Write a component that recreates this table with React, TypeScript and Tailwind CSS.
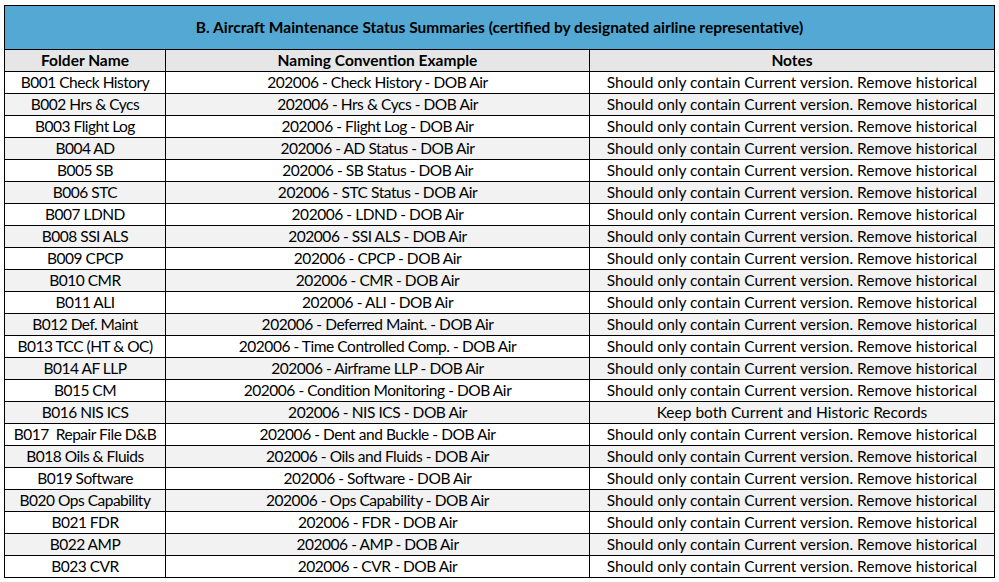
const rows: [string, string, string][] = [
  ["B001 Check History", "202006 - Check History - DOB Air", "Should only contain Current version. Remove historical"],
  ["B002 Hrs & Cycs", "202006 - Hrs & Cycs - DOB Air", "Should only contain Current version. Remove historical"],
  ["B003 Flight Log", "202006 - Flight Log - DOB Air", "Should only contain Current version. Remove historical"],
  ["B004 AD", "202006 - AD Status - DOB Air", "Should only contain Current version. Remove historical"],
  ["B005 SB", "202006 - SB Status - DOB Air", "Should only contain Current version. Remove historical"],
  ["B006 STC", "202006 - STC Status - DOB Air", "Should only contain Current version. Remove historical"],
  ["B007 LDND", "202006 - LDND - DOB Air", "Should only contain Current version. Remove historical"],
  ["B008 SSI ALS", "202006 - SSI ALS - DOB Air", "Should only contain Current version. Remove historical"],
  ["B009 CPCP", "202006 - CPCP - DOB Air", "Should only contain Current version. Remove historical"],
  ["B010 CMR", "202006 - CMR - DOB Air", "Should only contain Current version. Remove historical"],
  ["B011 ALI", "202006 - ALI - DOB Air", "Should only contain Current version. Remove historical"],
  ["B012 Def. Maint", "202006 - Deferred Maint. - DOB Air", "Should only contain Current version. Remove historical"],
  ["B013 TCC (HT & OC)", "202006 - Time Controlled Comp. - DOB Air", "Should only contain Current version. Remove historical"],
  ["B014 AF LLP", "202006 - Airframe LLP - DOB Air", "Should only contain Current version. Remove historical"],
  ["B015 CM", "202006 - Condition Monitoring - DOB Air", "Should only contain Current version. Remove historical"],
  ["B016 NIS ICS", "202006 - NIS ICS - DOB Air", "Keep both Current and Historic Records"],
  ["B017  Repair File D&B", "202006 - Dent and Buckle - DOB Air", "Should only contain Current version. Remove historical"],
  ["B018 Oils & Fluids", "202006 - Oils and Fluids - DOB Air", "Should only contain Current version. Remove historical"],
  ["B019 Software", "202006 - Software - DOB Air", "Should only contain Current version. Remove historical"],
  ["B020 Ops Capability", "202006 - Ops Capability - DOB Air", "Should only contain Current version. Remove historical"],
  ["B021 FDR", "202006 - FDR - DOB Air", "Should only contain Current version. Remove historical"],
  ["B022 AMP", "202006 - AMP - DOB Air", "Should only contain Current version. Remove historical"],
  ["B023 CVR", "202006 - CVR - DOB Air", "Should only contain Current version. Remove historical"],
];

// Calibri-ish digits/caps are narrower than Lato's; tighten the first two columns
const colTracking = ["tracking-[-0.5px]", "tracking-[-0.45px]", ""];

export default function App() {
  return (
    <div className="w-[999px] h-[582px] bg-white pt-[5px] pl-[4px] overflow-hidden font-['Lato',sans-serif] text-[15.5px] text-black">
      <div className="grid grid-cols-[161px_424px_405px] w-[991px] border-l border-t border-black">
        {/* Title */}
        <div className="col-span-3 h-[44px] flex items-center justify-center bg-[#53a9d3] border-r border-b border-black font-bold">
          B. Aircraft Maintenance Status Summaries (certified by designated airline representative)
        </div>

        {/* Header */}
        {["Folder Name", "Naming Convention Example", "Notes"].map((h) => (
          <div
            key={h}
            className="h-[22px] flex items-center justify-center bg-[#e7e6e6] border-r border-b border-black font-bold"
          >
            {h}
          </div>
        ))}

        {rows.map((r, i) =>
          r.map((cell, j) => (
            <div
              key={`${i}-${j}`}
              className={`h-[22px] flex items-center justify-center whitespace-pre border-r border-b border-black ${colTracking[j]} ${
                i % 2 === 1 ? "bg-[#f2f2f2]" : "bg-white"
              }`}
            >
              {cell}
            </div>
          ))
        )}
      </div>
    </div>
  );
}
